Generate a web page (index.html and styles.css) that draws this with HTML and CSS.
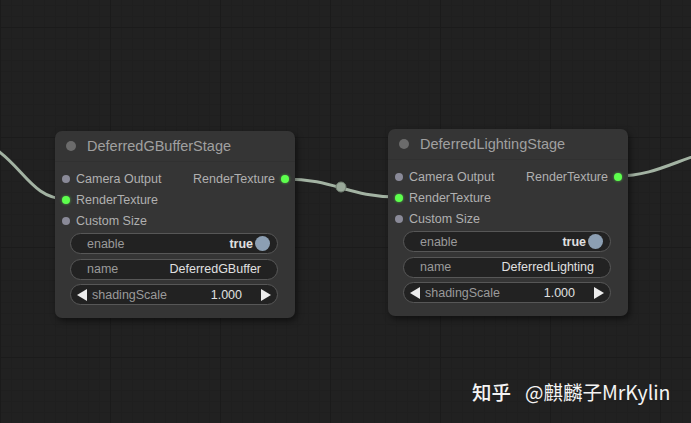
FILE: index.html
```html
<!DOCTYPE html>
<html lang="en">
<head>
    <meta charset="UTF-8">
    <meta name="viewport" content="width=device-width, initial-scale=1.0">
    <title>Render Graph</title>
    <link rel="stylesheet" href="styles.css">
</head>
<body>
    <div class="canvas">
        <svg class="links" width="691" height="423" viewBox="0 0 691 423">
            <path d="M -30 138 C 20 150, 25 199, 66 199" />
            <path d="M 285 179 C 335 179, 348 197, 398 197" />
            <path d="M 617 176 C 655 176, 675 160, 720 148" />
            <circle cx="341" cy="187" r="5" />
        </svg>

        <div class="node node-gbuffer">
            <div class="node-title">
                <span class="title-dot"></span>
                <span>DeferredGBufferStage</span>
            </div>
            <div class="slots">
                <div class="slot-row">
                    <span class="slot"><i class="dot"></i>Camera Output</span>
                    <span class="slot out">RenderTexture<i class="dot on"></i></span>
                </div>
                <div class="slot-row">
                    <span class="slot"><i class="dot on"></i>RenderTexture</span>
                </div>
                <div class="slot-row">
                    <span class="slot"><i class="dot"></i>Custom Size</span>
                </div>
            </div>
            <div class="widgets">
                <div class="widget">
                    <span class="label">enable</span>
                    <span class="value toggle">true<i class="knob"></i></span>
                </div>
                <div class="widget">
                    <span class="label">name</span>
                    <span class="value">DeferredGBuffer</span>
                </div>
                <div class="widget number">
                    <i class="arrow left"></i>
                    <span class="label">shadingScale</span>
                    <span class="value">1.000</span>
                    <i class="arrow right"></i>
                </div>
            </div>
        </div>

        <div class="node node-lighting">
            <div class="node-title">
                <span class="title-dot"></span>
                <span>DeferredLightingStage</span>
            </div>
            <div class="slots">
                <div class="slot-row">
                    <span class="slot"><i class="dot"></i>Camera Output</span>
                    <span class="slot out">RenderTexture<i class="dot on"></i></span>
                </div>
                <div class="slot-row">
                    <span class="slot"><i class="dot on"></i>RenderTexture</span>
                </div>
                <div class="slot-row">
                    <span class="slot"><i class="dot"></i>Custom Size</span>
                </div>
            </div>
            <div class="widgets">
                <div class="widget">
                    <span class="label">enable</span>
                    <span class="value toggle">true<i class="knob"></i></span>
                </div>
                <div class="widget">
                    <span class="label">name</span>
                    <span class="value">DeferredLighting</span>
                </div>
                <div class="widget number">
                    <i class="arrow left"></i>
                    <span class="label">shadingScale</span>
                    <span class="value">1.000</span>
                    <i class="arrow right"></i>
                </div>
            </div>
        </div>

        <div class="watermark">知乎<span class="author">@麒麟子MrKylin</span></div>
    </div>
</body>
</html>
```

FILE: styles.css
```css
:root {
    --canvas-bg: #212121;
    --grid-line: #1b1b1b;
    --grid-minor: #1f1f1f;
    --node-bg: #353535;
    --widget-bg: #222;
    --widget-border: #575757;
    --link-color: #a3b3a3;
    --slot-off: #8a8a98;
    --slot-on: #5dff4d;
}
body {
    margin: 0;
    background-color: var(--canvas-bg);
    font-family: 'Liberation Sans', Arial, sans-serif;
}
.canvas {
    position: relative;
    width: 691px;
    height: 423px;
    overflow: hidden;
    background-color: var(--canvas-bg);
    background-image:
        linear-gradient(var(--grid-line) 1px, transparent 1px),
        linear-gradient(90deg, var(--grid-line) 1px, transparent 1px),
        linear-gradient(var(--grid-minor) 1px, transparent 1px),
        linear-gradient(90deg, var(--grid-minor) 1px, transparent 1px);
    background-size: 110px 110px, 110px 110px, 11px 11px, 11px 11px;
    background-position: 0 27px, 0 27px, 0 5px, 0 5px;
}
.links {
    position: absolute;
    left: 0;
    top: 0;
}
.links path {
    fill: none;
    stroke: var(--link-color);
    stroke-width: 3;
}
.links circle {
    fill: #99a899;
    stroke: #6f7d6f;
    stroke-width: 1;
}
.node {
    position: absolute;
    background-color: var(--node-bg);
    border-radius: 7px;
    box-shadow: 2px 3px 6px rgba(0, 0, 0, 0.5);
    box-sizing: border-box;
    padding-bottom: 13px;
}
.node-gbuffer {
    left: 55px;
    top: 131px;
    width: 240px;
}
.node-lighting {
    left: 388px;
    top: 129px;
    width: 240px;
}
.node-title {
    height: 30px;
    display: flex;
    align-items: center;
    gap: 11px;
    padding-left: 11px;
    color: #a0a0a0;
    font-size: 14.5px;
    border-bottom: 1px solid #313131;
}
.title-dot {
    width: 10px;
    height: 10px;
    border-radius: 50%;
    background-color: #6b6b6b;
}
.slots {
    padding-top: 6px;
}
.slot-row {
    height: 21px;
    display: flex;
    align-items: center;
    justify-content: space-between;
}
.slot {
    display: flex;
    align-items: center;
    gap: 6px;
    padding-left: 7px;
    color: #b0b0b0;
    font-size: 12.5px;
}
.slot.out {
    padding-left: 0;
    padding-right: 6px;
}
.dot {
    width: 8px;
    height: 8px;
    border-radius: 50%;
    background-color: var(--slot-off);
}
.dot.on {
    background-color: var(--slot-on);
    box-shadow: 0 0 3px rgba(93, 255, 77, 0.6);
}
.widgets {
    display: flex;
    flex-direction: column;
    gap: 4.5px;
    margin: 2px 17px 0 15px;
}
.widget {
    height: 21px;
    box-sizing: border-box;
    display: flex;
    align-items: center;
    justify-content: space-between;
    padding: 0 16px;
    background-color: var(--widget-bg);
    border: 1px solid var(--widget-border);
    border-radius: 11px;
    font-size: 12.5px;
}
.label {
    color: #9a9a9a;
}
.value {
    color: #e0e0e0;
}
.toggle {
    display: flex;
    align-items: center;
    gap: 2px;
    margin-right: -9px;
    font-weight: bold;
}
.knob {
    width: 15px;
    height: 15px;
    border-radius: 50%;
    background-color: #8c9fb3;
}
.widget.number {
    padding: 0 6px;
    justify-content: flex-start;
}
.widget.number .label {
    margin-left: 5px;
}
.widget.number .value {
    margin-left: auto;
    margin-right: 19px;
}
.arrow {
    width: 0;
    height: 0;
    border-top: 6px solid transparent;
    border-bottom: 6px solid transparent;
}
.arrow.left {
    border-right: 10px solid #ececec;
}
.arrow.right {
    border-left: 10px solid #ececec;
}
.watermark {
    position: absolute;
    left: 472px;
    top: 377px;
    color: #f4f4f4;
    font-family: 'Noto Sans CJK SC', 'Noto Sans', sans-serif;
    font-size: 19.5px;
    font-weight: 500;
    white-space: nowrap;
}
.author {
    font-weight: normal;
    margin-left: 14px;
}
```
